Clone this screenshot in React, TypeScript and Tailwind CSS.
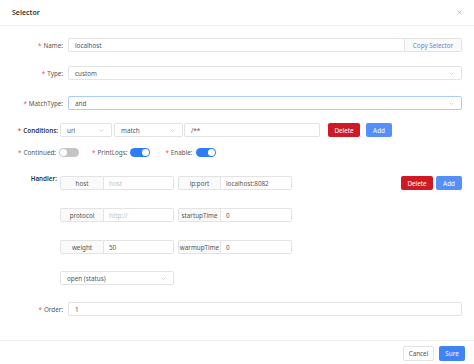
const Req = () => <span className="text-[#ff4d4f] mr-[2px]">*</span>;

function Chevron() {
  return (
    <svg width="5" height="3" viewBox="0 0 10 6" className="shrink-0">
      <path d="M1 1l4 4 4-4" fill="none" stroke="#bbb" strokeWidth="1.2" />
    </svg>
  );
}

function Select({ value, w, active }: { value: string; w?: string; active?: boolean }) {
  return (
    <div
      className={`h-[14px] ${w ?? "flex-1"} flex items-center justify-between pl-[6px] pr-[7px] rounded-[2px] border ${
        active ? "border-[#a9cdfb]" : "border-[#e3e3e3]"
      }`}
    >
      <span>{value}</span>
      <Chevron />
    </div>
  );
}

function Toggle({ on }: { on?: boolean }) {
  return (
    <div
      className={`w-[20px] h-[9px] rounded-full p-[1px] flex ${
        on ? "bg-[#2f7df6] justify-end" : "bg-[#c4c4c4] justify-start"
      }`}
    >
      <div className="w-[7px] h-[7px] rounded-full bg-white" />
    </div>
  );
}

function Pair({ addon, value, placeholder, w1, w2 }: { addon: string; value?: string; placeholder?: string; w1: string; w2: string }) {
  return (
    <div className="flex h-[14px]">
      <div className={`${w1} flex items-center justify-center bg-[#fafafa] border border-[#e3e3e3] rounded-l-[2px]`}>{addon}</div>
      <div className={`${w2} flex items-center pl-[5px] border border-l-0 border-[#e3e3e3] rounded-r-[2px]`}>
        {value ? <span>{value}</span> : <span className="text-[#c2c2c2]">{placeholder}</span>}
      </div>
    </div>
  );
}

function Btn({ kind, children, w }: { kind: "del" | "add"; children: string; w: string }) {
  return (
    <div
      className={`${w} h-[14px] rounded-[2px] flex items-center justify-center text-white ${
        kind === "del" ? "bg-[#cf1a26]" : "bg-[#5590f8]"
      }`}
    >
      {children}
    </div>
  );
}

export default function App() {
  return (
    <div className="w-[474px] h-[364px] bg-white overflow-hidden font-['Noto_Sans',sans-serif] text-[6.3px] text-[#555] leading-[9px]">
      <div className="h-[26px] flex items-center justify-between pl-[12px] pr-[12px] border-b border-[#f0f0f0]">
        <span className="text-[7px] font-semibold text-[#333]">Selector</span>
        <svg width="5" height="5" viewBox="0 0 10 10">
          <path d="M1 1l8 8M9 1l-8 8" stroke="#999" strokeWidth="1.1" />
        </svg>
      </div>

      <div className="h-[314px] pr-[12px] flex flex-col">
        <div className="mt-[12px] flex items-center">
          <div className="w-[63px] text-right"><Req />Name:</div>
          <div className="ml-[5px] flex-1 flex h-[14px]">
            <div className="flex-1 flex items-center pl-[6px] border border-[#e3e3e3] rounded-l-[2px]">localhost</div>
            <div className="w-[57px] flex items-center justify-center bg-[#fafafa] border border-l-0 border-[#e3e3e3] rounded-r-[2px] text-[#5b86d6]">
              Copy Selector
            </div>
          </div>
        </div>

        <div className="mt-[14px] flex items-center">
          <div className="w-[63px] text-right"><Req />Type:</div>
          <div className="ml-[5px] flex-1 flex"><Select value="custom" /></div>
        </div>

        <div className="mt-[16px] flex items-center">
          <div className="w-[63px] text-right"><Req />MatchType:</div>
          <div className="ml-[5px] flex-1 flex"><Select value="and" active /></div>
        </div>

        <div className="mt-[13px] flex items-center">
          <div className="w-[58px] text-right font-semibold text-[#333]"><Req />Conditions:</div>
          <div className="ml-[2px] flex items-center">
            <Select value="uri" w="w-[52px]" />
            <div className="ml-[2px]"><Select value="match" w="w-[69px]" /></div>
            <div className="ml-[1px] w-[136px] h-[14px] flex items-center pl-[6px] border border-[#e3e3e3] rounded-[2px]">/**</div>
            <div className="ml-[8px]"><Btn kind="del" w="w-[32px]">Delete</Btn></div>
            <div className="ml-[6px]"><Btn kind="add" w="w-[26px]">Add</Btn></div>
          </div>
        </div>

        <div className="mt-[8px] h-[14px] flex items-center">
          <div className="w-[56px] text-right"><Req />Continued:</div>
          <div className="ml-[3px]"><Toggle /></div>
          <div className="ml-[13px]"><Req />PrintLogs:</div>
          <div className="ml-[3px]"><Toggle on /></div>
          <div className="ml-[15px]"><Req />Enable:</div>
          <div className="ml-[3px]"><Toggle on /></div>
        </div>

        <div className="mt-[17px] flex items-start">
          <div className="w-[57px] text-right font-semibold text-[#333] leading-[5px]">Handler:</div>
          <div className="ml-[3px] flex-1 flex flex-col">
            <div className="flex items-center">
              <Pair addon="host" placeholder="host" w1="w-[44px]" w2="w-[70px]" />
              <div className="ml-[4px]"><Pair addon="ip:port" value="localhost:8082" w1="w-[43px]" w2="w-[71px]" /></div>
              <div className="ml-auto flex">
                <Btn kind="del" w="w-[32px]">Delete</Btn>
                <div className="ml-[3px]"><Btn kind="add" w="w-[26px]">Add</Btn></div>
              </div>
            </div>
            <div className="mt-[18px] flex items-center">
              <Pair addon="protocol" placeholder="http://" w1="w-[44px]" w2="w-[70px]" />
              <div className="ml-[4px]"><Pair addon="startupTime" value="0" w1="w-[43px]" w2="w-[71px]" /></div>
            </div>
            <div className="mt-[18px] flex items-center">
              <Pair addon="weight" value="50" w1="w-[44px]" w2="w-[70px]" />
              <div className="ml-[4px]"><Pair addon="warmupTime" value="0" w1="w-[43px]" w2="w-[71px]" /></div>
            </div>
            <div className="mt-[17px] flex">
              <Select value="open (status)" w="w-[114px]" />
            </div>
          </div>
        </div>

        <div className="mt-[17px] flex items-center">
          <div className="w-[63px] text-right"><Req />Order:</div>
          <div className="ml-[5px] flex-1 h-[14px] flex items-center pl-[6px] border border-[#e3e3e3] rounded-[2px]">1</div>
        </div>
      </div>

      <div className="border-t border-[#f0f0f0] pt-[5px] pr-[9px] flex justify-end">
        <div className="w-[31px] h-[15px] flex items-center justify-center border border-[#e3e3e3] rounded-[2px]">Cancel</div>
        <div className="ml-[5px] w-[26px] h-[15px] flex items-center justify-center bg-[#3f84f7] text-white rounded-[2px]">Sure</div>
      </div>
    </div>
  );
}
